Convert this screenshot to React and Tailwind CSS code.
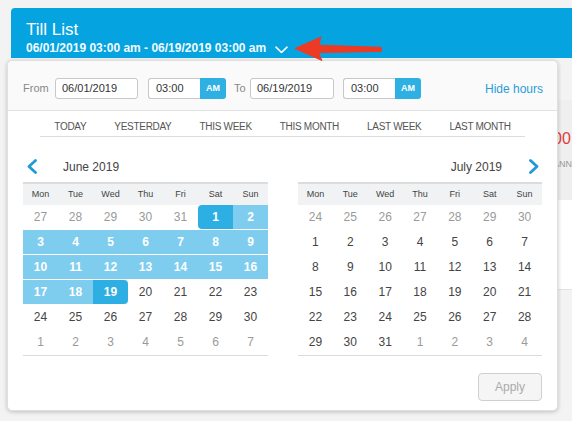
import React from "react";

const juneRows = [
  [["27","o"],["28","o"],["29","o"],["30","o"],["31","o"],["1","s"],["2","r"]],
  [["3","r"],["4","r"],["5","r"],["6","r"],["7","r"],["8","r"],["9","r"]],
  [["10","r"],["11","r"],["12","r"],["13","r"],["14","r"],["15","r"],["16","r"]],
  [["17","r"],["18","r"],["19","e"],["20","n"],["21","n"],["22","n"],["23","n"]],
  [["24","n"],["25","n"],["26","n"],["27","n"],["28","n"],["29","n"],["30","n"]],
  [["1","o"],["2","o"],["3","o"],["4","o"],["5","o"],["6","o"],["7","o"]],
];

const julyRows = [
  [["24","o"],["25","o"],["26","o"],["27","o"],["28","o"],["29","o"],["30","o"]],
  [["1","n"],["2","n"],["3","n"],["4","n"],["5","n"],["6","n"],["7","n"]],
  [["8","n"],["9","n"],["10","n"],["11","n"],["12","n"],["13","n"],["14","n"]],
  [["15","n"],["16","n"],["17","n"],["18","n"],["19","n"],["20","n"],["21","n"]],
  [["22","n"],["23","n"],["24","n"],["25","n"],["26","n"],["27","n"],["28","n"]],
  [["29","n"],["30","n"],["31","n"],["1","o"],["2","o"],["3","o"],["4","o"]],
];

const weekdays = ["Mon", "Tue", "Wed", "Thu", "Fri", "Sat", "Sun"];

function cellClass(t) {
  switch (t) {
    case "o":
      return "text-[#9a9a9a]";
    case "n":
      return "text-[#444]";
    case "r":
      return "bg-[#7ecdef] text-white font-bold";
    case "s":
      return "bg-[#2eafe3] text-white font-bold rounded-l-[4px]";
    case "e":
      return "bg-[#2eafe3] text-white font-bold rounded-r-[4px]";
    default:
      return "";
  }
}

function Chevron({ dir }) {
  return (
    <svg width="12" height="15" viewBox="0 0 12 15" fill="none">
      {dir === "left" ? (
        <path d="M9.5 1.5 L3 7.5 L9.5 13.5" stroke="#1f9ad7" strokeWidth="2.8" strokeLinecap="round" strokeLinejoin="round" />
      ) : (
        <path d="M2.5 1.5 L9 7.5 L2.5 13.5" stroke="#1f9ad7" strokeWidth="2.8" strokeLinecap="round" strokeLinejoin="round" />
      )}
    </svg>
  );
}

function Calendar({ title, rows, side, width }) {
  return (
    <div className={width}>
      <div className="h-[28px] pb-[3px] flex items-center">
        {side === "left" ? (
          <>
            <div className="ml-[3px]"><Chevron dir="left" /></div>
            <span className="ml-[25px] text-[12px] text-[#444]">{title}</span>
          </>
        ) : (
          <>
            <span className="ml-auto text-[12px] text-[#444]">{title}</span>
            <div className="ml-[26px] mr-[2px]"><Chevron dir="right" /></div>
          </>
        )}
      </div>
      <div className="h-[2px] bg-[#dcdcdc]" />
      <div className="grid grid-cols-7 h-[21px] bg-[#f1f2f4]">
        {weekdays.map((d) => (
          <div key={d} className="flex items-center justify-center text-[9px] text-[#444]">{d}</div>
        ))}
      </div>
      {rows.map((r, i) => (
        <div key={i} className="grid grid-cols-7 h-[25px]">
          {r.map(([n, t], j) => (
            <div key={j} className="border-b border-white">
              <div className={"h-[24px] flex items-center justify-center text-[12px] " + cellClass(t)}>{n}</div>
            </div>
          ))}
        </div>
      ))}
      <div className="h-[1px] bg-[#dcdcdc]" />
    </div>
  );
}

function TimeInput() {
  return (
    <div className="flex h-[21px]">
      <div className="w-[52px] bg-white border border-r-0 border-[#c8c8c8] rounded-l-[3px] pl-[7px] flex items-center text-[11px] text-[#333]">03:00</div>
      <div className="w-[26px] bg-[#2fb0e3] rounded-r-[3px] flex items-center justify-center text-white text-[9px] font-bold">AM</div>
    </div>
  );
}

function DateInput({ value, w }) {
  return (
    <div className={"h-[21px] bg-white border border-[#c8c8c8] rounded-[3px] pl-[6px] flex items-center text-[11px] text-[#333] " + w}>{value}</div>
  );
}

const shortcuts = ["TODAY", "YESTERDAY", "THIS WEEK", "THIS MONTH", "LAST WEEK", "LAST MONTH"];

export default function App() {
  return (
    <div className="relative w-[572px] h-[421px] overflow-hidden bg-[#f3f3f3] font-['Liberation_Sans',Arial,sans-serif]">
      {/* Header bar */}
      <div className="ml-[11px] mt-[8px] h-[50px] bg-[#05a3df] rounded-tl-[4px] pl-[15px] pt-[12px] text-white">
        <div className="text-[17px] leading-[20px]">Till List</div>
        <div className="flex items-center mt-[1px] h-[14px]">
          <span className="text-[12px] font-bold leading-[14px] text-[#f2fbff]">06/01/2019 03:00 am - 06/19/2019 03:00 am</span>
          <svg className="ml-[9px] mt-[4px]" width="13" height="8" viewBox="0 0 13 8" fill="none">
            <path d="M1 1.2 L6.5 6.5 L12 1.2" stroke="white" strokeWidth="1.6" strokeLinecap="round" strokeLinejoin="round" />
          </svg>
        </div>
      </div>

      {/* Background content (partly hidden behind dropdown) */}
      <div className="flex ml-[11px] pt-[42px] gap-[8px]">
        <div className="w-[538px] h-[300px] bg-white" />
        <div className="flex-1 flex flex-col">
          <div className="h-[100px] bg-[#efefef] pt-[30px] pl-[1px]">
            <div className="text-[16px] text-[#e23b3b] leading-[18px] whitespace-nowrap">00</div>
            <div className="mt-[10px] text-[9px] text-[#999] whitespace-nowrap">ANN</div>
          </div>
          <div className="h-[90px] bg-white border-b border-[#e2e2e2]" />
        </div>
      </div>

      {/* Dropdown panel */}
      <div className="absolute left-[7px] top-[60px] w-[551px] bg-white border border-[#e0e0e0] rounded-[5px] shadow-[0_1px_4px_rgba(0,0,0,0.22)]">
        <div className="flex items-center pl-[15px] pr-[14px] pt-[17px] pb-[11px] border-b border-[#e2e2e2] bg-[#fafafa] rounded-t-[5px]">
          <span className="w-[32px] text-[11px] text-[#888]">From</span>
          <DateInput value="06/01/2019" w="w-[83px]" />
          <div className="ml-[10px]"><TimeInput /></div>
          <span className="w-[24px] pl-[8px] text-[11px] text-[#888]">To</span>
          <DateInput value="06/19/2019" w="w-[84px]" />
          <div className="ml-[9px]"><TimeInput /></div>
          <span className="ml-auto text-[12px] text-[#2a9dd8]">Hide hours</span>
        </div>

        <div className="mt-[5px] mx-auto w-fit flex border-b border-[#dddddd]">
          {shortcuts.map((s) => (
            <div key={s} className="h-[20px] px-[14px] flex items-center text-[10px] tracking-[-0.3px] text-[#555]">{s}</div>
          ))}
        </div>

        <div className="mt-[17px] flex pl-[15px] pr-[15px] gap-[30px]">
          <Calendar title="June 2019" rows={juneRows} side="left" width="w-[245px]" />
          <Calendar title="July 2019" rows={julyRows} side="right" width="w-[244px]" />
        </div>

        <div className="mt-[17px] pb-[9px] pr-[15px] flex justify-end">
          <div className="w-[64px] h-[28px] rounded-[4px] border border-[#cfcfcf] bg-[#f5f5f5] flex items-center justify-center text-[12px] text-[#aaa]">Apply</div>
        </div>
      </div>

      {/* Red arrow annotation */}
      <svg className="absolute left-[294px] top-[35px]" width="90" height="28" viewBox="0 0 90 28" fill="none">
        <path d="M1 13.5 L27 2 Q25.5 6 25 10.2 L87 12.3 Q88.5 14.3 87 16.4 L25 17.6 Q25.5 21.5 28 25.5 Z" fill="#ec3b24" stroke="#ec3b24" strokeWidth="1" strokeLinejoin="round" />
      </svg>
    </div>
  );
}
